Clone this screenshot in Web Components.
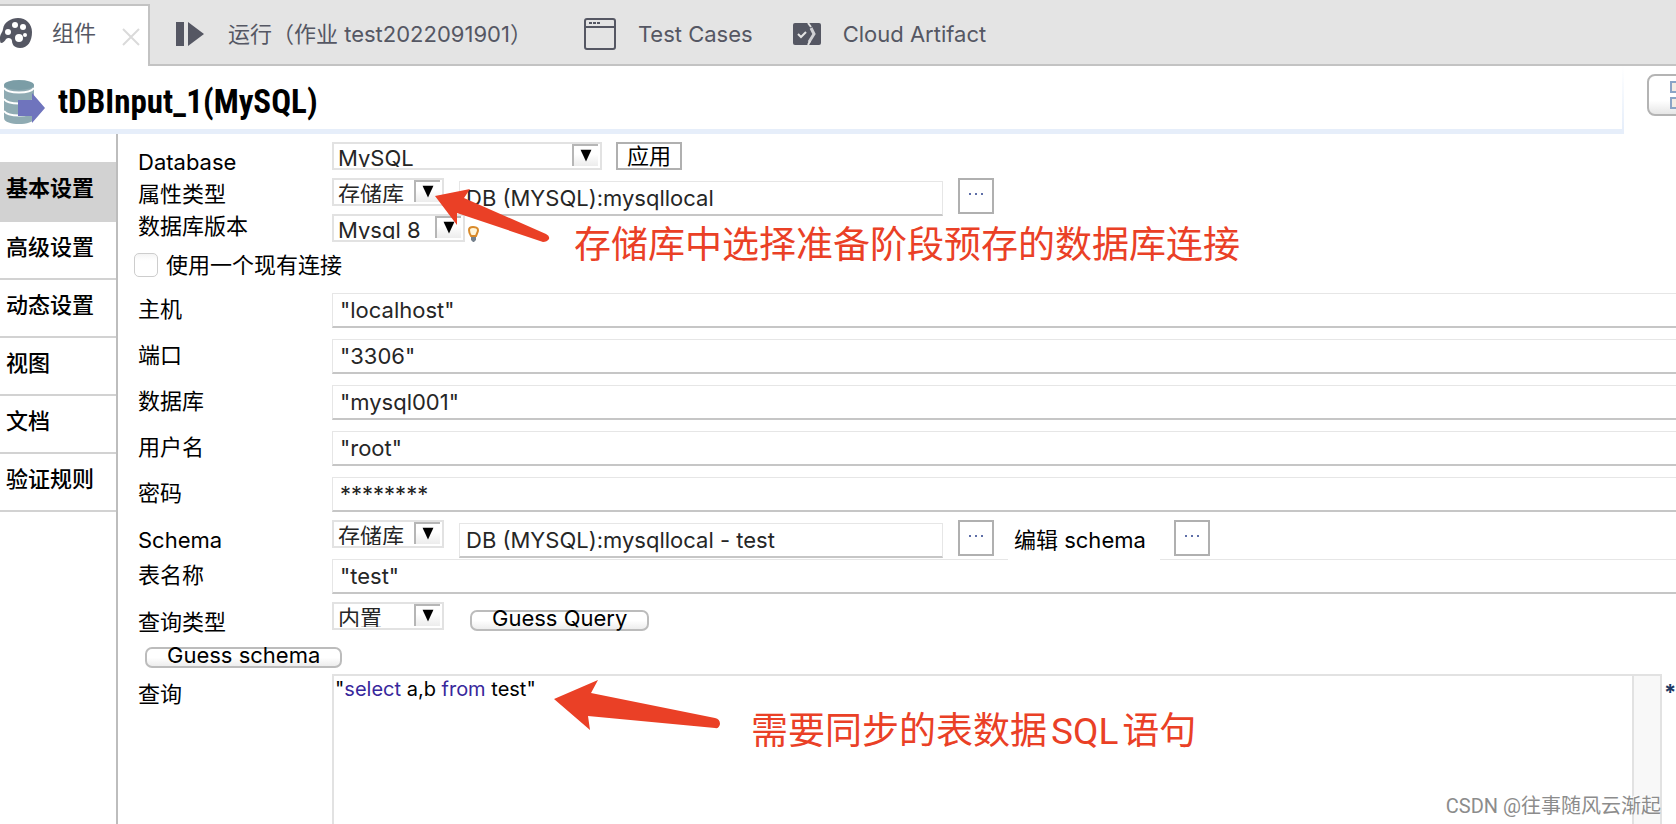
<!DOCTYPE html>
<html lang="zh-CN">
<head>
<meta charset="UTF-8">
<meta name="viewport" content="width=device-width, initial-scale=1">
<title>tDBInput_1(MySQL)</title>
<style>
  html, body {
    height: 100%;
    margin: 0;
  }

  body {
    font-family: Inter, "Noto Sans CJK SC", sans-serif;
    font-size: 22px;
    line-height: 24px;
    color: #000;
    background: #fff;
    overflow: hidden;
  }
</style>
</head>
<body>
<component-view></component-view>

<script>
function attach(el, html) {
  const template = document.createElement('template');
  template.innerHTML = html;
  el.attachShadow({ mode: 'open' }).appendChild(template.content.cloneNode(true));
}

// One tab of the top bar. Attributes: active, closable
class ViewTab extends HTMLElement {
  constructor() {
    super();
    attach(this, `
      <style>
        :host {
          display: flex;
          align-items: center;
          box-sizing: border-box;
          padding-top: 4px;
          color: #555763;
          border-bottom: 2px solid #c3c3c3;
        }

        :host([active]) {
          background: #fff;
          border: solid #c3c3c3;
          border-width: 2px 2px 0 0;
          margin-top: 4px;
          padding: 0 0 6px;
          width: 150px;
        }

        .tab {
          display: flex;
          align-items: center;
          gap: 22px;
          padding: 0;
          border: none;
          background: none;
          font: inherit;
          color: inherit;
          white-space: nowrap;
        }

        :host([active]) .tab {
          gap: 20px;
        }

        .close {
          display: none;
          margin: 8px 8px 0 auto;
          padding: 0;
          border: none;
          background: none;
          line-height: 0;
        }

        :host([closable]) .close {
          display: block;
        }
      </style>
      <button class="tab" type="button"><slot name="icon"></slot><slot></slot></button>
      <button class="close" type="button" aria-label="关闭">
        <svg width="18" height="18" viewBox="0 0 18 18"><path d="M1 1l16 16M17 1L1 17" stroke="#dadada" stroke-width="2" fill="none"/></svg>
      </button>
    `);
  }
}
customElements.define('view-tab', ViewTab);

class TabBar extends HTMLElement {
  constructor() {
    super();
    attach(this, `
      <style>
        :host {
          display: flex;
          height: 66px;
          background: #e4e4e4;
        }

        .run { padding-left: 26px; }
        .cases { padding-left: 52px; }
        .cloud { padding-left: 40px; }

        .rest {
          flex: 1;
          border-bottom: 2px solid #c3c3c3;
        }

        svg {
          display: block;
        }
      </style>
      <view-tab active closable>
        <svg slot="icon" width="32" height="32" viewBox="0 0 32 32">
          <path fill="#555763" d="M18 1C26 1 32 7 32 15C32 24 28 31 20 31C14 31 12 27 12 24C12 21 8 20 6 22C5 24 3 26 1 26C0 26 0 22 0 20C0 17 3 15 3 12C4 5 11 1 18 1Z"/>
          <g fill="#fff"><circle cx="15" cy="8" r="3"/><circle cx="23" cy="10" r="3"/><circle cx="8" cy="15" r="3"/><circle cx="25" cy="18" r="2"/><circle cx="19" cy="21" r="4"/></g>
        </svg>
        组件
      </view-tab>
      <view-tab class="run">
        <svg slot="icon" width="30" height="26" viewBox="0 0 30 26"><path fill="#555763" d="M0 1h8v24H0zM12 1l16 12-16 12z"/></svg>
        运行（作业 test2022091901）
      </view-tab>
      <view-tab class="cases">
        <svg slot="icon" width="32" height="32" viewBox="0 0 32 32">
          <rect x="1" y="1" width="30" height="30" rx="2" fill="none" stroke="#555763" stroke-width="2"/>
          <path d="M1 9h30" stroke="#555763" stroke-width="2"/>
          <path d="M5 5h3M9 5h3M13 5h3" stroke="#555763" stroke-width="2"/>
        </svg>
        Test Cases
      </view-tab>
      <view-tab class="cloud">
        <svg slot="icon" width="28" height="22" viewBox="0 0 28 22">
          <rect width="28" height="22" rx="2" fill="#555763"/>
          <path fill="none" stroke="#e4e4e4" stroke-width="2" d="M5 11l3 3 5-5M15 0l3 4"/>
          <path fill="none" stroke="#d0d0d4" stroke-width="3" d="M18 5l3 6-5 8"/>
          <path fill="none" stroke="#e4e4e4" stroke-width="2" d="M17 18l-2 4"/>
        </svg>
        Cloud Artifact
      </view-tab>
      <div class="rest"></div>
    `);
  }
}
customElements.define('tab-bar', TabBar);

class ComponentHeader extends HTMLElement {
  constructor() {
    super();
    attach(this, `
      <style>
        :host {
          display: flex;
          height: 68px;
        }

        .title {
          flex: 1;
          display: flex;
          align-items: center;
          gap: 13px;
          box-sizing: border-box;
          padding-top: 8px;
          border-bottom: 5px solid #e6eefa;
          background: linear-gradient(#fff, #e6eefa) right / 2px 100% no-repeat;
        }

        h1 {
          margin: 0;
          font-family: "Liberation Sans Narrow", "Roboto Condensed", Roboto, sans-serif;
          font-size: 33px;
          line-height: 40px;
          font-weight: 700;
        }

        .tools {
          flex: none;
          width: 52px;
          box-sizing: border-box;
          padding: 8px 0 0 23px;
          overflow: hidden;
        }

        .tools button {
          width: 72px;
          height: 42px;
          padding: 0 0 0 21px;
          border: 2px solid #b4b4b4;
          border-radius: 8px;
          background: linear-gradient(#fff 65%, #e6e6e6);
          text-align: left;
          line-height: 0;
        }
      </style>
      <div class="title">
        <svg width="45" height="46" viewBox="0 0 45 46">
          <path fill="#8fabb3" d="M4 6V39C4 47 34 47 34 39V6Z"/>
          <ellipse cx="19" cy="6" rx="15" ry="5" fill="#7b9da6"/>
          <path fill="none" stroke="#fff" stroke-width="2" d="M4 9C8 15 30 15 34 9M4 20C8 26 30 26 34 20M4 32C8 38 30 38 34 32"/>
          <path fill="#6f74bd" d="M18 21h14v-7l13 15-13 15v-7H18z"/>
        </svg>
        <h1>tDBInput_1(MySQL)</h1>
      </div>
      <div class="tools">
        <button type="button" aria-label="布局">
          <svg width="30" height="28" viewBox="0 0 30 28">
            <path fill="#f4ece4" stroke="#8ba4c6" stroke-width="2" d="M1 1h10v10H1zM1 17h10v10H1z"/>
          </svg>
        </button>
      </div>
    `);
  }
}
customElements.define('component-header', ComponentHeader);

class SideNav extends HTMLElement {
  constructor() {
    super();
    attach(this, `
      <style>
        :host {
          display: block;
          box-sizing: border-box;
          width: 118px;
          padding-top: 28px;
          border-right: 2px solid #bdbdbd;
        }

        button {
          display: block;
          width: 100%;
          height: 58px;
          padding: 0 0 6px 6px;
          border: none;
          border-bottom: 2px solid #d2d2d2;
          background: none;
          font: inherit;
          font-weight: 500;
          text-align: left;
        }

        button[aria-current] {
          height: 60px;
          background: #d2d2d2;
          font-weight: 700;
        }
      </style>
      <button type="button" aria-current="page">基本设置</button>
      <button type="button">高级设置</button>
      <button type="button">动态设置</button>
      <button type="button">视图</button>
      <button type="button">文档</button>
      <button type="button">验证规则</button>
    `);
  }
}
customElements.define('side-nav', SideNav);

// Two column row: label slot on the left, controls on the right
class FormRow extends HTMLElement {
  constructor() {
    super();
    attach(this, `
      <style>
        :host {
          display: grid;
          grid-template-columns: 194px minmax(0, 1fr);
          align-items: start;
          padding-left: 20px;
        }

        .label {
          padding-top: 4px;
        }

        :host([low]) .label { padding-top: 8px; }
        :host([high]) .label { padding-top: 0; }

        .field {
          display: flex;
          align-items: flex-start;
        }
      </style>
      <div class="label"><slot name="label"></slot></div>
      <div class="field"><slot></slot></div>
    `);
  }
}
customElements.define('form-row', FormRow);

// Query editor: the textarea takes the input, the pre behind it shows the coloured text
class SqlEditor extends HTMLElement {
  constructor() {
    super();
    attach(this, `
      <style>
        :host {
          display: flex;
          height: 200px;
          flex: 1;
          box-sizing: border-box;
          border: 2px solid #e2e2e2;
          font-size: 20px;
        }

        .code {
          flex: 1;
          display: grid;
        }

        pre, textarea {
          grid-area: 1 / 1;
          margin: 0;
          padding: 1px;
          border: none;
          outline: none;
          resize: none;
          background: none;
          font: inherit;
          white-space: pre-wrap;
        }

        textarea {
          color: transparent;
          caret-color: #000;
        }

        b {
          font-weight: inherit;
          color: #38289c;
        }

        .track {
          width: 26px;
          border-left: 2px solid #e2e2e2;
          background: #f8f8f8;
        }
      </style>
      <div class="code">
        <pre aria-hidden="true"></pre>
        <textarea aria-label="查询" spellcheck="false"></textarea>
      </div>
      <div class="track"></div>
    `);
    this.pre = this.shadowRoot.querySelector('pre');
    this.area = this.shadowRoot.querySelector('textarea');
    this.area.addEventListener('input', () => this.paint());
  }

  connectedCallback() {
    this.area.value = this.getAttribute('value') || '';
    this.paint();
  }

  paint() {
    this.pre.textContent = '';
    this.area.value.split(/\b(select|from|where)\b/i).forEach((part, i) => {
      const node = i % 2 ? document.createElement('b') : document.createElement('span');
      node.textContent = part;
      this.pre.appendChild(node);
    });
  }
}
customElements.define('sql-editor', SqlEditor);

class SettingsForm extends HTMLElement {
  constructor() {
    super();
    const arrow = '<svg class="arrow" viewBox="0 0 26 22"><path d="M7 4h12l-6 13z"/></svg>';
    const dots = '<svg width="16" height="4" viewBox="0 0 16 4" fill="#5f6fa8"><path d="M1 1h2v2H1zM7 1h2v2H7zM13 1h2v2h-2z"/></svg>';
    attach(this, `
      <style>
        :host {
          display: block;
          padding-top: 8px;
        }

        .group {
          display: grid;
          gap: 11px;
          margin-bottom: 8px;
        }

        .combos {
          gap: 8px;
          grid-auto-rows: 28px;
        }

        .combo {
          display: block;
          flex: none;
          box-sizing: border-box;
          width: 112px;
          height: 28px;
          padding: 0 2px 1px 0;
          border: 2px solid #e2e2e2;
        }

        .combo.wide { width: 270px; }
        .combo.mid { width: 133px; }

        .clip {
          display: grid;
          grid-template-rows: 23px;
          height: 23px;
          overflow: hidden;
        }

        select {
          grid-area: 1 / 1;
          appearance: none;
          width: 100%;
          height: 28px;
          padding: 0 0 0 4px;
          border: none;
          border-radius: 0;
          outline: none;
          background: none;
          font: inherit;
          color: #262626;
        }

        .arrow {
          grid-area: 1 / 1;
          justify-self: end;
          box-sizing: border-box;
          width: 26px;
          height: 22px;
          border: solid #b6b6b6;
          border-width: 2px 0 0 2px;
          background: linear-gradient(#fff 40%, #ececec);
          pointer-events: none;
        }

        input[type="text"] {
          flex: 1;
          min-width: 0;
          box-sizing: border-box;
          height: 35px;
          padding: 0 7px;
          border: solid #e6e6e6;
          border-width: 1px 0 2px 1px;
          border-bottom-color: #c6c6c6;
          outline: none;
          font: inherit;
          color: #262626;
          background: #fff;
        }

        input[type="text"].source {
          flex: none;
          width: 484px;
          margin: 3px 15px 0;
          padding: 0 6px;
          border-right-width: 1px;
        }

        .box {
          flex: none;
          box-sizing: border-box;
          width: 36px;
          height: 36px;
          padding: 0 0 4px;
          border: 2px solid #b0b0b0;
          background: #fff;
          line-height: 0;
        }

        .apply {
          width: 66px;
          height: 28px;
          margin-left: 14px;
          padding: 0;
          font: inherit;
          line-height: 24px;
        }

        .schema-row {
          height: 39px;
        }

        .edit {
          position: relative;
          box-sizing: border-box;
          height: 42px;
          margin: 0 14px;
          padding: 8px 14px 0 6px;
          background: #fff;
        }

        .check {
          display: flex;
          align-items: center;
          gap: 8px;
          height: 30px;
          padding-left: 16px;
          margin-bottom: 13px;
        }

        .check input {
          appearance: none;
          width: 24px;
          height: 24px;
          margin: 0;
          border: 1px solid #cdcdcd;
          border-radius: 5px;
          background: linear-gradient(#f4f4f4, #fff 30%);
        }

        .bulb {
          margin: 12px 0 0 3px;
        }

        .pill {
          display: block;
          box-sizing: border-box;
          height: 21px;
          padding: 0 20px 6px;
          border: 2px solid #bcbcbc;
          border-radius: 7px;
          background: linear-gradient(#fff 50%, #ededed);
          font: inherit;
          line-height: 12px;
        }

        .query { margin: 8px 0 0 26px; }
        .guess { margin: 13px 0 6px 27px; }

        .mark {
          flex: none;
          width: 12px;
          margin: 6px 0 0 2px;
          font-weight: 700;
          color: #1e3a63;
          overflow: hidden;
          white-space: nowrap;
        }
      </style>
      <div class="group combos">
        <form-row low>
          <label slot="label" for="database">Database</label>
          <span class="combo wide"><span class="clip"><select id="database"><option>MySQL</option></select>${arrow}</span></span>
          <button class="box apply" type="button">应用</button>
        </form-row>
        <form-row>
          <label slot="label" for="property">属性类型</label>
          <span class="combo"><span class="clip"><select id="property"><option>存储库</option></select>${arrow}</span></span>
          <input class="source" type="text" value="DB (MYSQL):mysqllocal" aria-label="属性类型">
          <button class="box" type="button" aria-label="选择">${dots}</button>
        </form-row>
        <form-row high>
          <label slot="label" for="version">数据库版本</label>
          <span class="combo mid"><span class="clip"><select id="version"><option>Mysql 8</option></select>${arrow}</span></span>
          <svg class="bulb" width="11" height="16" viewBox="0 0 11 16">
            <path fill="#fff6dc" stroke="#d98a2b" stroke-width="2" d="M3 10C1 7 1 6 1 4C1 2 3 1 5 1S10 2 10 4C10 6 9 7 8 10Z"/>
            <path fill="#74808c" d="M3 11h5v3l-2 2H5l-2-2z"/>
          </svg>
        </form-row>
      </div>
      <label class="check"><input type="checkbox">使用一个现有连接</label>
      <div class="group">
        <form-row><label slot="label" for="host">主机</label><input id="host" type="text" value='"localhost"'></form-row>
        <form-row><label slot="label" for="port">端口</label><input id="port" type="text" value='"3306"'></form-row>
        <form-row><label slot="label" for="db">数据库</label><input id="db" type="text" value='"mysql001"'></form-row>
        <form-row><label slot="label" for="user">用户名</label><input id="user" type="text" value='"root"'></form-row>
        <form-row><label slot="label" for="password">密码</label><input id="password" type="text" value="********"></form-row>
      </div>
      <form-row class="schema-row" low>
        <label slot="label" for="schema">Schema</label>
        <span class="combo"><span class="clip"><select id="schema"><option>存储库</option></select>${arrow}</span></span>
        <input class="source" type="text" value="DB (MYSQL):mysqllocal - test" aria-label="Schema">
        <button class="box" type="button" aria-label="选择">${dots}</button>
        <label class="edit" for="edit">编辑 schema</label>
        <button class="box" id="edit" type="button">${dots}</button>
      </form-row>
      <div class="group">
        <form-row><label slot="label" for="table">表名称</label><input id="table" type="text" value='"test"'></form-row>
      </div>
      <form-row low>
        <label slot="label" for="query-type">查询类型</label>
        <span class="combo"><span class="clip"><select id="query-type"><option>内置</option></select>${arrow}</span></span>
        <button class="pill query" type="button">Guess Query</button>
      </form-row>
      <button class="pill guess" type="button">Guess schema</button>
      <form-row low>
        <span slot="label">查询</span>
        <sql-editor value='"select a,b from test"'></sql-editor>
        <span class="mark">*</span>
      </form-row>
    `);
  }
}
customElements.define('settings-form', SettingsForm);

// Red remark with an arrow, laid over the form
class NoteArrow extends HTMLElement {
  constructor() {
    super();
    attach(this, `
      <style>
        :host {
          position: absolute;
          display: flex;
          align-items: flex-start;
          color: #ea4026;
          font-family: Roboto, "Noto Sans CJK SC", sans-serif;
          font-size: 37px;
          line-height: 44px;
          white-space: nowrap;
          pointer-events: none;
        }
      </style>
      <slot name="arrow"></slot>
      <slot></slot>
    `);
  }
}
customElements.define('note-arrow', NoteArrow);

class ComponentView extends HTMLElement {
  constructor() {
    super();
    attach(this, `
      <style>
        :host {
          position: relative;
          display: flex;
          flex-direction: column;
          height: 100vh;
          overflow: hidden;
        }

        main {
          flex: 1;
          min-height: 0;
          display: flex;
        }

        side-nav {
          flex: none;
        }

        settings-form {
          flex: 1;
          min-width: 0;
        }

        .first { left: 435px; top: 188px; gap: 24px; }
        .second { left: 554px; top: 680px; gap: 29px; }
        .text { padding-top: 36px; }
        .second .text { padding-top: 30px; }
        .latin { margin: 0 4px; }

        .watermark {
          position: absolute;
          right: 15px;
          bottom: 6px;
          font-family: Roboto, "Noto Sans CJK SC", sans-serif;
          font-size: 20px;
          color: #8c8c8c;
          text-shadow: -1px -1px 0 #fff;
        }
      </style>
      <tab-bar></tab-bar>
      <component-header></component-header>
      <main>
        <side-nav></side-nav>
        <settings-form></settings-form>
      </main>
      <note-arrow class="first">
        <svg slot="arrow" width="115" height="56" viewBox="0 0 115 56"><path fill="#ea4026" d="M0 8L35 1L29 10L111 46Q115 48 114 51Q112 54 108 54L22 25V37Z"/></svg>
        <span class="text">存储库中选择准备阶段预存的数据库连接</span>
      </note-arrow>
      <note-arrow class="second">
        <svg slot="arrow" width="168" height="52" viewBox="0 0 168 52"><path fill="#ea4026" d="M0 19L44 0L37 13L161 38Q166 39 166 44Q165 49 161 48L34 36L36 50Z"/></svg>
        <span class="text">需要同步的表数据<span class="latin">SQL</span>语句</span>
      </note-arrow>
      <div class="watermark">CSDN @往事随风云渐起</div>
    `);
  }
}
customElements.define('component-view', ComponentView);
</script>
</body>
</html>
